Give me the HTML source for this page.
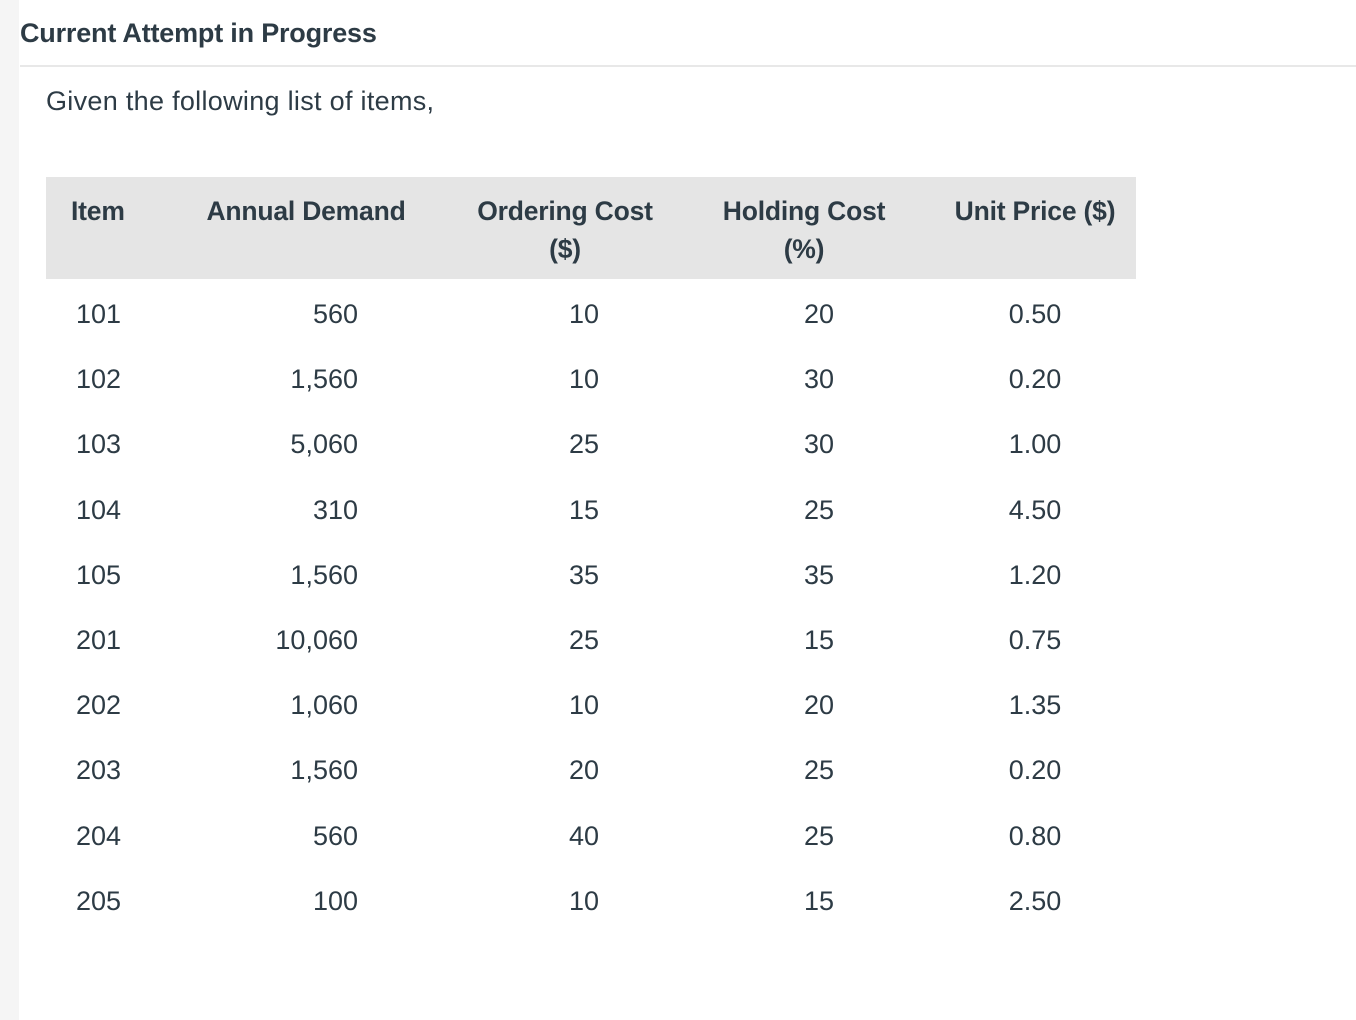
<!DOCTYPE html>
<html><head><meta charset="utf-8"><style>
body{margin:0;width:1356px;height:1020px;background:#fff;position:relative;overflow:hidden;font-family:"Liberation Sans",sans-serif;color:#2d3b45}
.strip{position:absolute;left:0;top:0;width:19px;height:1020px;background:#f5f5f5}
.t{position:absolute;white-space:nowrap;line-height:1}
.title{left:20px;top:20px;font-size:27px;font-weight:bold;letter-spacing:-0.2px}
.hr{position:absolute;left:20px;top:65px;width:1336px;height:2px;background:#e8e8e8}
.intro{left:46px;top:88px;font-size:27px;letter-spacing:0.3px}
.hdr{position:absolute;left:46px;top:177px;width:1090px;height:102px;background:#e5e5e5}
.h{position:absolute;font-weight:bold;font-size:26.5px;line-height:38px;text-align:center;white-space:nowrap;letter-spacing:-0.2px}
.c{position:absolute;font-size:27px;line-height:30px;white-space:nowrap}
</style></head><body>
<div class="strip"></div>
<div class="t title">Current Attempt in Progress</div>
<div class="hr"></div>
<div class="t intro">Given the following list of items,</div>
<div class="hdr"></div>
<div class="h" style="left:71px;top:192px;text-align:left">Item</div>
<div class="h" style="left:186px;width:240px;top:192px">Annual Demand</div>
<div class="h" style="left:445px;width:240px;top:192px">Ordering Cost<br>($)</div>
<div class="h" style="left:684px;width:240px;top:192px">Holding Cost<br>(%)</div>
<div class="h" style="left:915px;width:240px;top:192px">Unit Price ($)</div>
<div id="rows"></div>
<script>
var d=[["101","560","10","20","0.50"],["102","1,560","10","30","0.20"],["103","5,060","25","30","1.00"],["104","310","15","25","4.50"],["105","1,560","35","35","1.20"],["201","10,060","25","15","0.75"],["202","1,060","10","20","1.35"],["203","1,560","20","25","0.20"],["204","560","40","25","0.80"],["205","100","10","15","2.50"]];
var h="";
d.forEach(function(r,i){var y=299+i*65.2;
h+='<div class="c" style="left:76px;top:'+y+'px">'+r[0]+'</div>';
h+='<div class="c" style="left:158px;width:200px;text-align:right;top:'+y+'px">'+r[1]+'</div>';
h+='<div class="c" style="left:484px;width:200px;text-align:center;top:'+y+'px">'+r[2]+'</div>';
h+='<div class="c" style="left:719px;width:200px;text-align:center;top:'+y+'px">'+r[3]+'</div>';
h+='<div class="c" style="left:935px;width:200px;text-align:center;top:'+y+'px">'+r[4]+'</div>';});
document.getElementById("rows").innerHTML=h;
</script>
</body></html>
